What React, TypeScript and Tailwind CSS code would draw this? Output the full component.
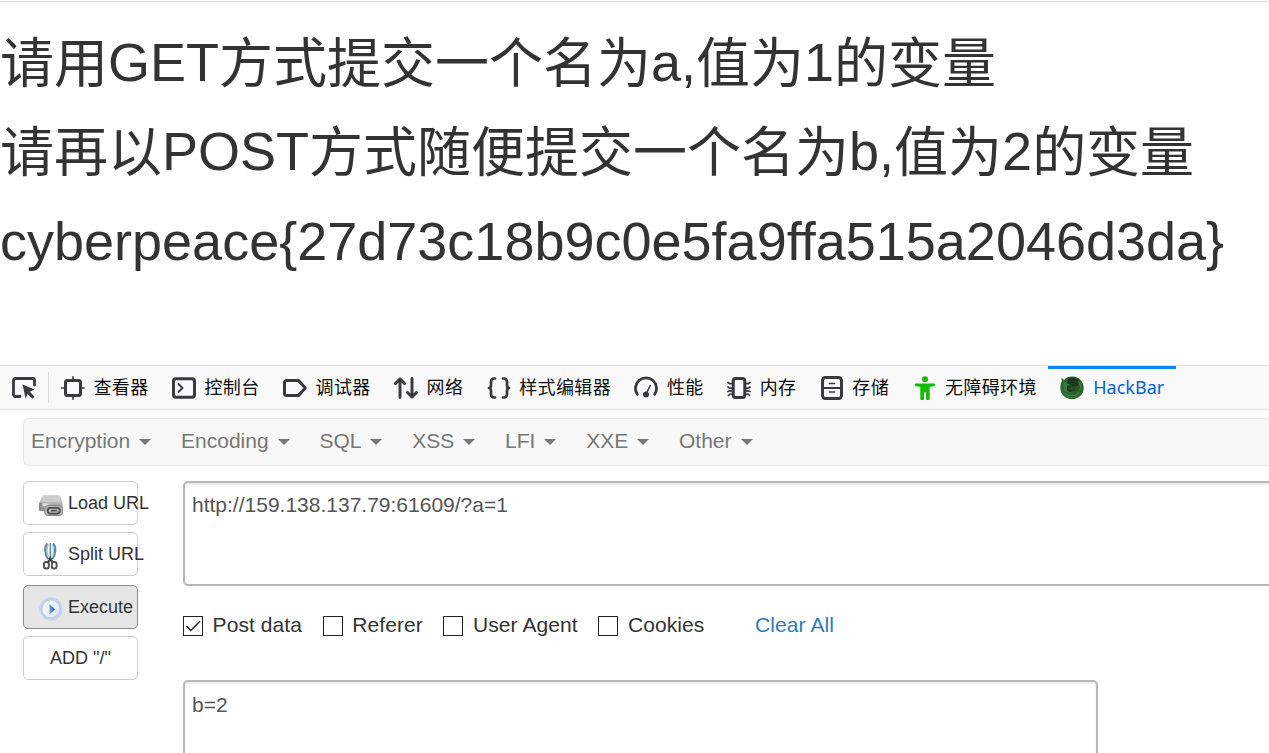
import clsx from 'clsx';
import type { ReactNode } from 'react';

const HEADINGS = [
  '请用GET方式提交一个名为a,值为1的变量',
  '请再以POST方式随便提交一个名为b,值为2的变量',
  'cyberpeace{27d73c18b9c0e5fa9ffa515a2046d3da}',
];

const MENUS = ['Encryption', 'Encoding', 'SQL', 'XSS', 'LFI', 'XXE', 'Other'];

const CHECKS = [
  { label: 'Post data', checked: true },
  { label: 'Referer', checked: false },
  { label: 'User Agent', checked: false },
  { label: 'Cookies', checked: false },
];

function Icon({ children }: { children: ReactNode }) {
  return (
    <svg
      viewBox="0 0 24 24"
      className="h-6 w-6 shrink-0"
      fill="none"
      stroke="#38383d"
      strokeWidth="3"
      strokeLinecap="round"
      strokeLinejoin="round"
    >
      {children}
    </svg>
  );
}

const TABS: { label: string; icon: ReactNode; active?: boolean }[] = [
  {
    label: '查看器',
    icon: (
      <Icon>
        <rect x="4.5" y="4.5" width="15" height="15" rx="2" />
        <path d="M12 .8v3M12 20.2v3M.8 12h3M20.2 12h3" strokeWidth="1.6" />
      </Icon>
    ),
  },
  {
    label: '控制台',
    icon: (
      <Icon>
        <rect x="1.5" y="2.8" width="21" height="18.4" rx="2.5" />
        <path d="m6.5 8 4 4-4 4" strokeWidth="1.8" />
      </Icon>
    ),
  },
  {
    label: '调试器',
    icon: (
      <Icon>
        <path d="M3.5 4.5h12L22.3 12l-6.8 7.5h-12a2 2 0 0 1-2-2v-11a2 2 0 0 1 2-2z" />
      </Icon>
    ),
  },
  {
    label: '网络',
    icon: (
      <Icon>
        <path d="M6 21.5V3M1.5 7.5 6 3l4.5 4.5M18 2.5V21M13.5 16.5 18 21l4.5-4.5" strokeWidth="2.9" />
      </Icon>
    ),
  },
  {
    label: '样式编辑器',
    icon: (
      <Icon>
        <path
          d="M8 2.5H7a3 3 0 0 0-3 3V9c0 2-.8 3-2 3 1.2 0 2 1 2 3v3.5a3 3 0 0 0 3 3h1M16 2.5h1a3 3 0 0 1 3 3V9c0 2 .8 3 2 3-1.2 0-2 1-2 3v3.5a3 3 0 0 1-3 3h-1"
          strokeWidth="2.7"
        />
      </Icon>
    ),
  },
  {
    label: '性能',
    icon: (
      <Icon>
        <path d="M3.3 18.3A10.5 10.5 0 1 1 20.7 18.3" strokeWidth="2.8" />
        <path d="M12 18.5 16.2 9.5" strokeWidth="1.5" />
        <circle cx="12" cy="18.5" r="3" fill="#38383d" stroke="none" />
      </Icon>
    ),
  },
  {
    label: '内存',
    icon: (
      <Icon>
        <rect x="6.2" y="2.5" width="11.6" height="19" rx="2.5" strokeWidth="3" />
        <path
          d="M1 6.5l1.500 1.200H5M1 11l1.500 1.200H5M1 15.500l1.500-.6H5M1.500 19.500 3 18h2M23 6.500l-1.500 1.200H19M23 11l-1.500 1.200H19M23 15.500l-1.500-.6H19M22.500 19.500 21 18h-2"
          strokeWidth="1.7"
        />
      </Icon>
    ),
  },
  {
    label: '存储',
    icon: (
      <Icon>
        <rect x="2.5" y="1.5" width="19" height="21" rx="3" strokeWidth="3" />
        <path d="M3 12h18" strokeWidth="2" />
        <path d="M9.5 7.5h5M9.5 16h5" strokeWidth="1.6" />
      </Icon>
    ),
  },
  {
    label: '无障碍环境',
    icon: (
      <svg viewBox="0 0 24 24" className="h-6 w-6 shrink-0" fill="#12bc00">
        <circle cx="12" cy="3.2" r="3" />
        <path d="M3.200 7.400h17.600a1.300 1.300 0 0 1 0 2.800l-4.100.6V23a1 1 0 0 1-1 1h-1.700a1 1 0 0 1-1-1v-6.500h-2V23a1 1 0 0 1-1 1H8.300a1 1 0 0 1-1-1V10.800l-4.100-.6a1.300 1.300 0 0 1 0-2.800z" />
      </svg>
    ),
  },
  { label: 'HackBar', icon: <FirefoxGlobe />, active: true },
];

function FirefoxGlobe() {
  return (
    <svg viewBox="0 0 24 24" className="h-6 w-6 shrink-0">
      <defs>
        <radialGradient id="globe" cx=".55" cy=".4" r=".62">
          <stop offset="0" stopColor="#234523" />
          <stop offset=".6" stopColor="#2b602a" />
          <stop offset="1" stopColor="#2f7430" />
        </radialGradient>
      </defs>
      <path
        d="M1.500 1.500 4 4C6 1.500 9 .4 12.500.5 19 .7 23.700 5.500 23.700 12c0 6.300-5 11.200-11.700 11.200S.3 18.300.3 12c0-3 .7-5 1.400-6.500z"
        fill="url(#globe)"
      />
      <path d="M8 3c4-2.500 10-1.500 12 3-3-1-3 1-2 3-2 3-5 1-7 0L7 8z" fill="#1a381c" />
      <path d="M3 7c2-1 4-.5 5 1l3 1c-2 1-3 1-3 2 0 3 4 4 7 2-2 5-9 5-11 0z" fill="#3f793d" />
      <path d="M7 9.500c2 .2 2 .5 3.500 0-.5 1.300-1.500 1.500-2 2.500 1 2 4 2.500 7 .5-1 4-7 5-8.500 1z" fill="#1b3a1c" />
      <path d="M18.500 5c2 3 2.500 6 1.500 9M5 17c4 4 10 4 14-1" fill="none" stroke="#4b8749" strokeWidth="1" />
    </svg>
  );
}

function PrinterIcon() {
  return (
    <svg viewBox="0 0 24 24" className="h-6 w-6 shrink-0">
      <defs>
        <linearGradient id="case" x1="0" y1="0" x2="0" y2="1">
          <stop offset="0" stopColor="#dedede" />
          <stop offset="1" stopColor="#8e8e8e" />
        </linearGradient>
      </defs>
      <path d="M5.500 1.800h14q1.500 0 2 2l2 6.500V18H1q-1 0-1-1.500V10l3-6.500q.8-1.700 2.500-1.700z" fill="url(#case)" />
      <path d="M6 2.500h13q1 0 1.500 1.500l1.500 5H2.500l2-5q.5-1.500 1.500-1.500z" fill="#cdcdcd" />
      <path d="M0 10h3v7H0z" fill="#8c8c8c" />
      <path d="M3.500 10.500h6v2.500h-6z" fill="#e0e0e0" />
      <rect x="5.800" y="12.500" width="17.700" height="10" rx="3" fill="#b9b9b9" stroke="#858585" />
      <rect x="8.800" y="14.800" width="12" height="5.800" rx="2.500" fill="none" stroke="#4b4b4b" strokeWidth="1.800" />
      <path d="M12 17.700h6" stroke="#4b4b4b" strokeWidth="1.500" />
    </svg>
  );
}

function ScissorsIcon() {
  return (
    <svg viewBox="0 0 24 28" className="h-7 w-6 shrink-0" fill="none">
      <path d="M8.500 1.500C5.500 5 5.500 12 9.500 17M14 1.500c3 3.500 3 10.500-1 15.500" stroke="#64899a" strokeWidth="2.500" />
      <path d="M9.300 2.500C7.500 7 8 12 10 16M13.200 2.500c1.800 4.500 1.300 9.500-.7 13.500" stroke="#b6d4df" strokeWidth="1.500" />
      <path d="M11.300 1v16" stroke="#587b8c" strokeWidth="1.300" />
      <path d="m12.500 16-4 4.500M10 16l4 4.500" stroke="#3c3c3c" strokeWidth="2" />
      <rect x="5" y="20" width="4.800" height="6.500" rx="2" stroke="#505050" strokeWidth="1.900" />
      <rect x="12.800" y="20" width="4.800" height="6.500" rx="2" stroke="#505050" strokeWidth="1.900" />
    </svg>
  );
}

function PlayIcon() {
  return (
    <svg viewBox="0 0 24 24" className="h-6 w-6 shrink-0">
      <defs>
        <linearGradient id="disc" x1="0" y1="0" x2="1" y2="1">
          <stop offset="0" stopColor="#fff" />
          <stop offset="1" stopColor="#d9deeb" />
        </linearGradient>
        <linearGradient id="play" x1="0" y1="0" x2="1" y2="0">
          <stop offset="0" stopColor="#72a3df" />
          <stop offset="1" stopColor="#2458ae" />
        </linearGradient>
      </defs>
      <circle cx="12" cy="12" r="11.300" fill="#c3d4ee" stroke="#c3d6f1" strokeWidth="1" />
      <circle cx="12" cy="12" r="9" fill="url(#disc)" stroke="#a9b8d2" strokeWidth=".6" />
      <path d="M10.500 7v10.500l5.500-5.300z" fill="url(#play)" />
    </svg>
  );
}

function SideButton({ label, icon, active }: { label: string; icon?: ReactNode; active?: boolean }) {
  return (
    <button
      className={clsx(
        'flex h-11 w-[115px] items-center rounded-[5px] border text-lg leading-none whitespace-nowrap text-[#333]',
        active ? 'border-[#8c8c8c] bg-[#e6e6e6]' : 'border-[#ccc] bg-white',
        icon ? 'pl-[15px]' : 'justify-center',
      )}
    >
      {icon && <span className="mt-1 mr-[5px] flex">{icon}</span>}
      <span>{label}</span>
    </button>
  );
}

function Checkbox({ label, checked }: { label: string; checked: boolean }) {
  return (
    <label className="flex items-center gap-[9.6px] tracking-[0.08px]">
      <span className="mt-0.5 flex h-5 w-5 items-center justify-center border border-[#222] bg-white">
        {checked && (
          <svg viewBox="0 0 18 18" className="h-[18px] w-[18px]" fill="none" stroke="#222" strokeWidth="1.5">
            <path d="m2.500 9 4.300 4.500L16 4.300" />
          </svg>
        )}
      </span>
      <span>{label}</span>
    </label>
  );
}

// Han runs sit slightly below the Latin baseline.
function Heading({ text }: { text: string }) {
  return (
    <h1 className="h-[59.4px] text-[54px] leading-[59.4px] whitespace-nowrap">
      {text.split(/([\u4e00-\u9fff]+)/).map((run, i) =>
        i % 2 ? (
          <span key={i} className="align-[-2px] leading-none">
            {run}
          </span>
        ) : (
          run
        ),
      )}
    </h1>
  );
}

function DevToolsTabs() {
  return (
    <div className="flex h-[45px] border-y border-[#e0e0e2] bg-[#f9f9fa] font-['Noto_Sans','Noto_Sans_CJK_SC',sans-serif] text-lg">
      <div className="flex w-12 shrink-0 items-center pl-3">
        <Icon>
          <path d="M8 20.500H3.500a2 2 0 0 1-2-2v-14a2 2 0 0 1 2-2h17a2 2 0 0 1 2 2V9" strokeWidth="2.8" />
          <path d="m10.500 8.500 12 5-4.600 2.300 4.600 5-2 2-4.900-4.800-2 4.500z" fill="#38383d" stroke="none" />
        </Icon>
      </div>
      <div className="my-1.5 w-px shrink-0 bg-[#dcdcde]" />
      {TABS.map((tab) => (
        <div
          key={tab.label}
          className={clsx(
            'flex shrink-0 items-center gap-2 border-t-[3px] px-3 pb-[3px] whitespace-nowrap',
            tab.active
              ? 'w-32 border-[#0a84ff] text-[#0060df]'
              : 'border-transparent tracking-[0.34px] text-[#0c0c0d]',
          )}
        >
          {tab.icon}
          <span className={clsx('-mt-px', tab.active ? 'ml-px' : 'ml-[0.5px] -mr-[0.5px]')}>
            {tab.label}
          </span>
        </div>
      ))}
    </div>
  );
}

export default function App() {
  return (
    <div className="h-[753px] w-full overflow-hidden bg-white font-['Liberation_Sans','Noto_Sans_CJK_SC',sans-serif] text-[#333]">
      <div className="h-[365px] pt-px">
        <div className="flex flex-col gap-[30px] border-t border-[#dedede] pt-[31px]">
          {HEADINGS.map((text) => (
            <Heading key={text} text={text} />
          ))}
        </div>
      </div>

      <DevToolsTabs />

      <div className="pt-2 pl-[23px] text-[21px] leading-[30px]">
        <nav className="flex h-12 items-center gap-[29.8px] rounded-l-md border border-r-0 border-[#e7e7e7] bg-[#f8f8f8] pb-0.5 pl-[7px] text-[#777]">
          {MENUS.map((menu) => (
            <div key={menu} className="flex items-center gap-[9px]">
              {menu}
              <span className="mt-0.5 border-x-[6px] border-t-[6px] border-x-transparent border-t-[#777]" />
            </div>
          ))}
        </nav>

        <div className="mt-[15px] flex gap-[45px]">
          <div className="flex shrink-0 flex-col">
            <SideButton label="Load URL" icon={<PrinterIcon />} />
            <div className="mt-[7px] mb-[9px]">
              <SideButton label="Split URL" icon={<ScissorsIcon />} />
            </div>
            <SideButton label="Execute" icon={<PlayIcon />} active />
            <div className="mt-[7px]">
              <SideButton label={'ADD "/"'} />
            </div>
          </div>

          <div className="min-w-0 grow">
            <div className="-mr-1 h-[105px] rounded-l-[5px] border-2 border-[#b8b8b8] px-[7px] pt-[7px] text-[#555] shadow-[inset_0_2px_2px_rgba(0,0,0,0.075)]">
              http://159.138.137.79:61609/?a=1
            </div>
            <div className="mt-6 flex h-[30px] items-center gap-[20.6px]">
              {CHECKS.map((c) => (
                <Checkbox key={c.label} label={c.label} checked={c.checked} />
              ))}
              <a className="ml-[30px] tracking-[0.1px] text-[#337ab7]">Clear All</a>
            </div>
            <div className="mt-10 h-[105px] w-[915px] rounded-[5px] border-2 border-[#b8b8b8] px-[7px] pt-2 text-[#555] shadow-[inset_0_2px_2px_rgba(0,0,0,0.075)]">
              b=2
            </div>
          </div>
        </div>
      </div>
    </div>
  );
}
